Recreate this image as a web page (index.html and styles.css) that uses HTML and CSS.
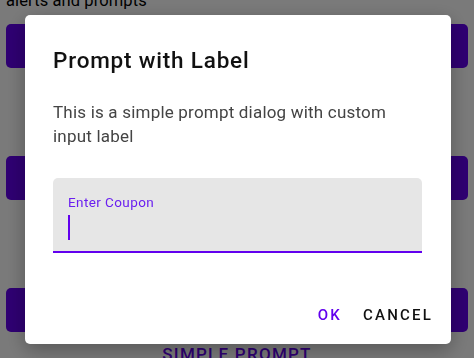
FILE: index.html
```html
<!DOCTYPE html>
<html lang="en">
<head>
    <meta charset="UTF-8">
    <meta name="viewport" content="width=device-width, initial-scale=1.0">
    <title>Prompt with Label</title>
    <link rel="stylesheet" href="styles.css">
</head>
<body>
    <!-- Page behind the dialog (scrolled) -->
    <div class="page">
        <p class="intro">Tap a button below to see examples of the<br>alerts and prompts</p>

        <div class="group">
            <button class="filled-button">Alert</button>
            <button class="text-button">Simple alert</button>
        </div>
        <div class="group">
            <button class="filled-button">Confirm</button>
            <button class="text-button">Simple confirm</button>
        </div>
        <div class="group">
            <button class="filled-button">Prompt</button>
            <button class="text-button">Simple prompt</button>
        </div>
    </div>

    <div class="scrim"></div>

    <!-- Prompt dialog -->
    <div class="dialog">
        <h2 class="dialog-title">Prompt with Label</h2>
        <p class="dialog-text">This is a simple prompt dialog with custom input label</p>

        <div class="field">
            <label class="field-label" for="coupon">Enter Coupon</label>
            <div class="field-input" id="coupon"><span class="caret"></span></div>
        </div>

        <div class="dialog-actions">
            <button class="dialog-button ok">OK</button>
            <button class="dialog-button">Cancel</button>
        </div>
    </div>
</body>
</html>
```

FILE: styles.css
```css
body {
    margin: 0;
    height: 358px;
    overflow: hidden;
    background-color: #ffffff;
    font-family: Roboto, "Noto Sans", Arial, sans-serif;
}

.page {
    margin-top: -34px;
    padding: 0 6px;
    display: flex;
    flex-direction: column;
}

.intro {
    margin: 0 0 12px;
    font-size: 16.5px;
    line-height: 23px;
    letter-spacing: 0.1px;
    color: #000;
    white-space: nowrap;
}

.group {
    display: flex;
    flex-direction: column;
    align-items: center;
    gap: 4px;
    margin-bottom: 48px;
}

.filled-button {
    width: 100%;
    height: 44px;
    border: none;
    border-radius: 5px;
    background-color: #6200ee;
}

.filled-button,
.text-button {
    font-family: inherit;
    font-size: 14px;
    font-weight: 500;
    letter-spacing: 1.25px;
    text-transform: uppercase;
    color: #6200ee;
}

.filled-button {
    color: transparent;
}

.text-button {
    height: 36px;
    padding: 0 8px;
    border: none;
    background: none;
    font-size: 17px;
}

.scrim {
    position: fixed;
    inset: 0;
    background-color: rgba(0, 0, 0, 0.52);
}

.dialog {
    position: fixed;
    left: 25px;
    top: 15px;
    width: 426px;
    height: 329px;
    box-sizing: border-box;
    padding: 31px 29px 0 28px;
    background-color: #ffffff;
    border-radius: 5px;
    box-shadow: 0 6px 20px rgba(0, 0, 0, 0.3);
    display: flex;
    flex-direction: column;
}

.dialog-title {
    margin: 0;
    font-size: 22.5px;
    font-weight: 500;
    line-height: 28px;
    letter-spacing: 0.8px;
    color: #111;
}

.dialog-text {
    margin: 27px 0 0;
    font-size: 17px;
    line-height: 23.5px;
    letter-spacing: 0.2px;
    color: #444;
}

.field {
    margin-top: 30px;
    height: 75px;
    box-sizing: border-box;
    padding: 16px 15px 0;
    background-color: #e6e6e6;
    border-radius: 5px 5px 0 0;
    border-bottom: 2px solid #6200ee;
}

.field-label {
    display: block;
    font-size: 13.5px;
    line-height: 16px;
    letter-spacing: 0.4px;
    color: #6a1ff0;
}

.field-input {
    margin-top: 5px;
    height: 26px;
}

.caret {
    display: block;
    width: 2px;
    height: 25px;
    background-color: #6200ee;
}

.dialog-actions {
    margin-top: auto;
    margin-right: -19px;
    margin-bottom: 11px;
    display: flex;
    justify-content: flex-end;
    gap: 5px;
}

.dialog-button {
    height: 36px;
    padding: 0 8px;
    border: none;
    background: none;
    font-family: inherit;
    font-size: 15px;
    font-weight: 500;
    letter-spacing: 2.2px;
    text-transform: uppercase;
    color: #111;
}

.dialog-button.ok {
    color: #6200ee;
}
```
